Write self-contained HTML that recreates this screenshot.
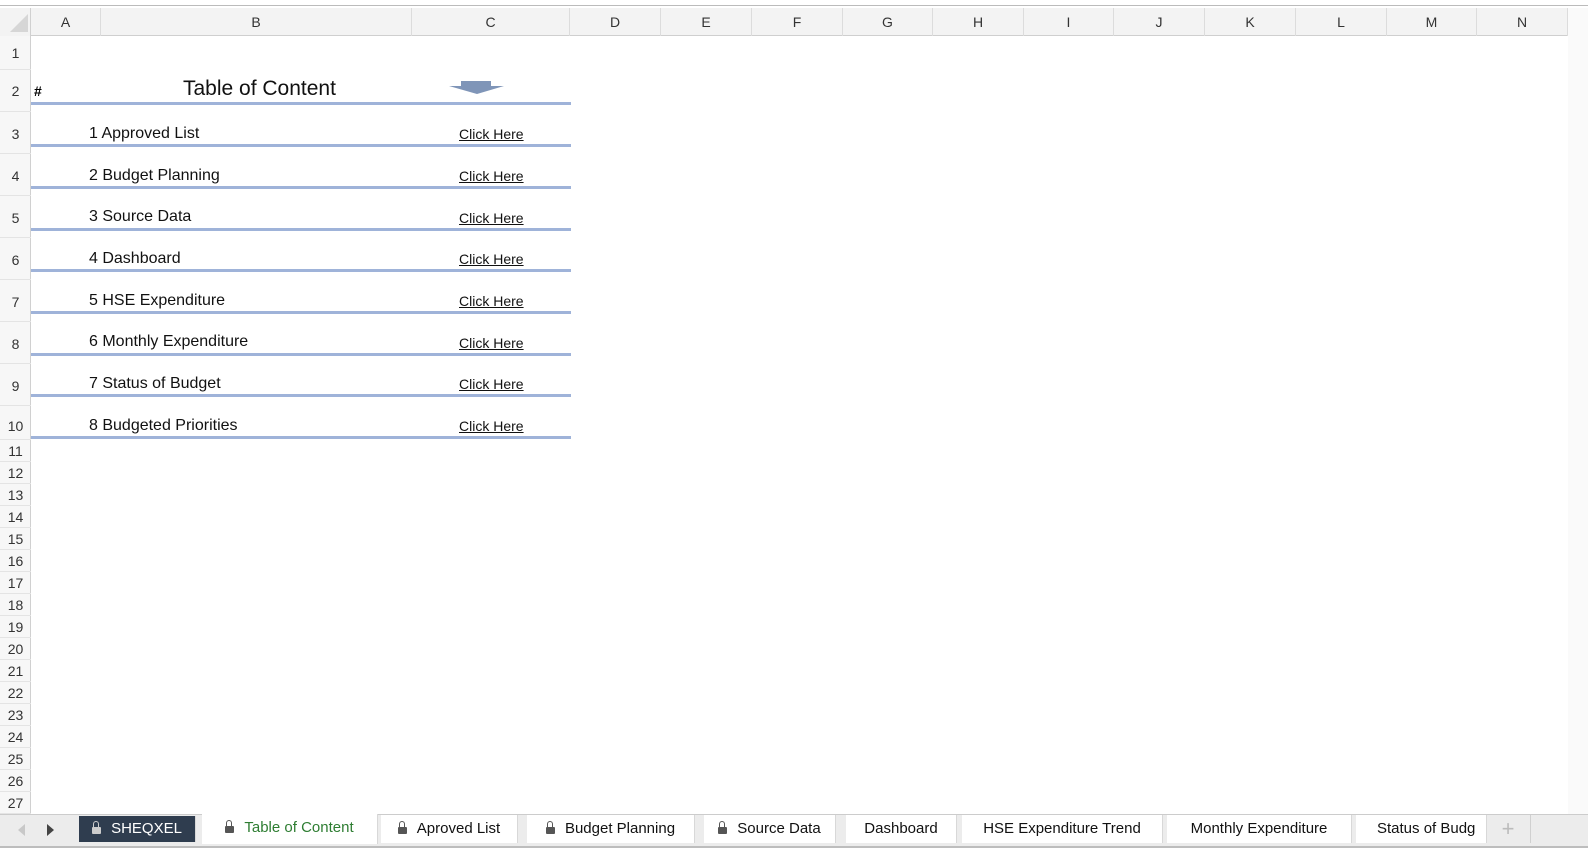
<!DOCTYPE html>
<html style="margin:0;padding:0;width:1588px;height:860px;overflow:hidden"><head><style>
body{margin:0;width:1588px;height:860px;overflow:hidden;background:#fff;font-family:"Liberation Sans",sans-serif;position:relative}
.a{position:absolute}
.ch{top:8px;height:28px;line-height:28px;text-align:center;font-size:14px;color:#333;border-right:1px solid #dcdcdc;box-sizing:border-box}
.rn{left:0;width:31px;text-align:center;font-size:14px;color:#333;border-bottom:1px solid #e4e4e4;box-sizing:border-box}
.it{font-size:16px;color:#111}
.lk{left:459px;font-size:14px;color:#111;text-decoration:underline}
.ln{left:31px;width:540px;height:3px;background:#9fb3d9}
.tab{top:815px;height:28px;line-height:28px;font-size:15px;color:#111;background:#fff;text-align:center;box-shadow:1px 0 0 #d8d8d8;white-space:nowrap}
.lock{display:inline-block;width:9px;height:7px;background:#555;border-radius:1px;position:relative;margin-right:10px;vertical-align:-1px}
.lock:before{content:"";position:absolute;left:1px;top:-6px;width:4px;height:5px;border:1.5px solid #555;border-bottom:none;border-radius:4px 4px 0 0}
.lw{background:#ccc}.lw:before{border-color:#ccc}
</style></head><body>
<div class="a" style="left:0;top:0;width:1588px;height:5px;background:#fff;border-bottom:1px solid #bbb"></div>
<div class="a" style="left:0;top:8px;width:1568px;height:28px;background:#f3f3f3;border-bottom:1px solid #cfcfcf;box-sizing:border-box"></div>
<div class="a" style="left:0;top:8px;width:31px;height:28px;background:#f3f3f3;border-right:1px solid #d0d0d0;box-sizing:border-box"></div>
<svg class="a" style="left:8px;top:14px" width="20" height="18"><polygon points="20,0 20,18 2,18" fill="#d6d6d6"/></svg>
<div class="a ch" style="left:31px;width:70px">A</div>
<div class="a ch" style="left:101px;width:311px">B</div>
<div class="a ch" style="left:412px;width:158px">C</div>
<div class="a ch" style="left:570px;width:91px">D</div>
<div class="a ch" style="left:661px;width:91px">E</div>
<div class="a ch" style="left:752px;width:91px">F</div>
<div class="a ch" style="left:843px;width:90px">G</div>
<div class="a ch" style="left:933px;width:91px">H</div>
<div class="a ch" style="left:1024px;width:90px">I</div>
<div class="a ch" style="left:1114px;width:91px">J</div>
<div class="a ch" style="left:1205px;width:91px">K</div>
<div class="a ch" style="left:1296px;width:91px">L</div>
<div class="a ch" style="left:1387px;width:90px">M</div>
<div class="a ch" style="left:1477px;width:91px">N</div>
<div class="a" style="left:1568px;top:8px;width:20px;height:806px;background:#fafafa"></div>
<div class="a" style="left:0;top:36px;width:31px;height:778px;background:#f7f7f7;border-right:1px solid #d0d0d0;box-sizing:border-box"></div>
<div class="a rn" style="top:36px;height:34px;line-height:34px">1</div>
<div class="a rn" style="top:70px;height:42px;line-height:42px">2</div>
<div class="a rn" style="top:112px;height:42px;line-height:44px">3</div>
<div class="a rn" style="top:154px;height:42px;line-height:44px">4</div>
<div class="a rn" style="top:196px;height:42px;line-height:44px">5</div>
<div class="a rn" style="top:238px;height:42px;line-height:44px">6</div>
<div class="a rn" style="top:280px;height:42px;line-height:44px">7</div>
<div class="a rn" style="top:322px;height:42px;line-height:44px">8</div>
<div class="a rn" style="top:364px;height:42px;line-height:44px">9</div>
<div class="a rn" style="top:406px;height:34px;line-height:40px">10</div>
<div class="a rn" style="top:440px;height:22px;line-height:22px">11</div>
<div class="a rn" style="top:462px;height:22px;line-height:22px">12</div>
<div class="a rn" style="top:484px;height:22px;line-height:22px">13</div>
<div class="a rn" style="top:506px;height:22px;line-height:22px">14</div>
<div class="a rn" style="top:528px;height:22px;line-height:22px">15</div>
<div class="a rn" style="top:550px;height:22px;line-height:22px">16</div>
<div class="a rn" style="top:572px;height:22px;line-height:22px">17</div>
<div class="a rn" style="top:594px;height:22px;line-height:22px">18</div>
<div class="a rn" style="top:616px;height:22px;line-height:22px">19</div>
<div class="a rn" style="top:638px;height:22px;line-height:22px">20</div>
<div class="a rn" style="top:660px;height:22px;line-height:22px">21</div>
<div class="a rn" style="top:682px;height:22px;line-height:22px">22</div>
<div class="a rn" style="top:704px;height:22px;line-height:22px">23</div>
<div class="a rn" style="top:726px;height:22px;line-height:22px">24</div>
<div class="a rn" style="top:748px;height:22px;line-height:22px">25</div>
<div class="a rn" style="top:770px;height:22px;line-height:22px">26</div>
<div class="a rn" style="top:792px;height:22px;line-height:22px">27</div>

<div class="a" style="left:34px;top:83px;font-size:14px;font-weight:bold">#</div>
<div class="a" style="left:183px;top:77px;font-size:21px;color:#111">Table of Content</div>
<svg class="a" style="left:449px;top:81px" width="56" height="14"><polygon points="12,0 42,0 42,5 55,5 28,13 0,5 12,5" fill="#7f95b8"/></svg>
<div class="a ln" style="top:102px"></div>
<div class="a it" style="left:89px;top:125px">1 Approved List</div><div class="a lk" style="top:126px">Click Here</div><div class="a ln" style="top:144px"></div>
<div class="a it" style="left:89px;top:167px">2 Budget Planning</div><div class="a lk" style="top:168px">Click Here</div><div class="a ln" style="top:186px"></div>
<div class="a it" style="left:89px;top:208px">3 Source Data</div><div class="a lk" style="top:210px">Click Here</div><div class="a ln" style="top:228px"></div>
<div class="a it" style="left:89px;top:250px">4 Dashboard</div><div class="a lk" style="top:251px">Click Here</div><div class="a ln" style="top:269px"></div>
<div class="a it" style="left:89px;top:292px">5 HSE Expenditure</div><div class="a lk" style="top:293px">Click Here</div><div class="a ln" style="top:311px"></div>
<div class="a it" style="left:89px;top:333px">6 Monthly Expenditure</div><div class="a lk" style="top:335px">Click Here</div><div class="a ln" style="top:353px"></div>
<div class="a it" style="left:89px;top:375px">7 Status of Budget</div><div class="a lk" style="top:376px">Click Here</div><div class="a ln" style="top:394px"></div>
<div class="a it" style="left:89px;top:417px">8 Budgeted Priorities</div><div class="a lk" style="top:418px">Click Here</div><div class="a ln" style="top:436px"></div>

<div class="a" style="left:0;top:814px;width:1588px;height:34px;background:#ececec;border-top:1px solid #ccc;border-bottom:2px solid #bdbdbd;box-sizing:border-box"></div>
<svg class="a" style="left:16px;top:823px" width="44" height="14"><polygon points="9,1 9,13 2,7" fill="#c8c8c8"/><polygon points="31,1 31,13 38,7" fill="#444"/></svg>
<div class="a tab" style="left:79px;width:116px;top:816px;height:26px;line-height:26px;background:#2f3d4f;color:#fff"><span class="lock lw"></span>SHEQXEL</div>
<div class="a tab" style="left:202px;width:175px;top:814px;height:30px;color:#2e7d32"><span class="lock"></span>Table of Content</div>
<div class="a tab" style="left:381px;width:136px"><span class="lock"></span>Aproved List</div>
<div class="a tab" style="left:527px;width:167px"><span class="lock"></span>Budget Planning</div>
<div class="a tab" style="left:704px;width:131px"><span class="lock"></span>Source Data</div>
<div class="a tab" style="left:846px;width:110px">Dashboard</div>
<div class="a tab" style="left:962px;width:200px">HSE Expenditure Trend</div>
<div class="a tab" style="left:1167px;width:184px">Monthly Expenditure</div>
<div class="a tab" style="left:1356px;width:130px;overflow:hidden;text-align:left;padding-left:21px;box-sizing:border-box">Status of Budg</div>
<div class="a" style="left:1486px;top:815px;width:44px;height:28px;line-height:28px;text-align:center;color:#bbb;font-size:22px;border-right:1px solid #d0d0d0">+</div>
</body></html>
